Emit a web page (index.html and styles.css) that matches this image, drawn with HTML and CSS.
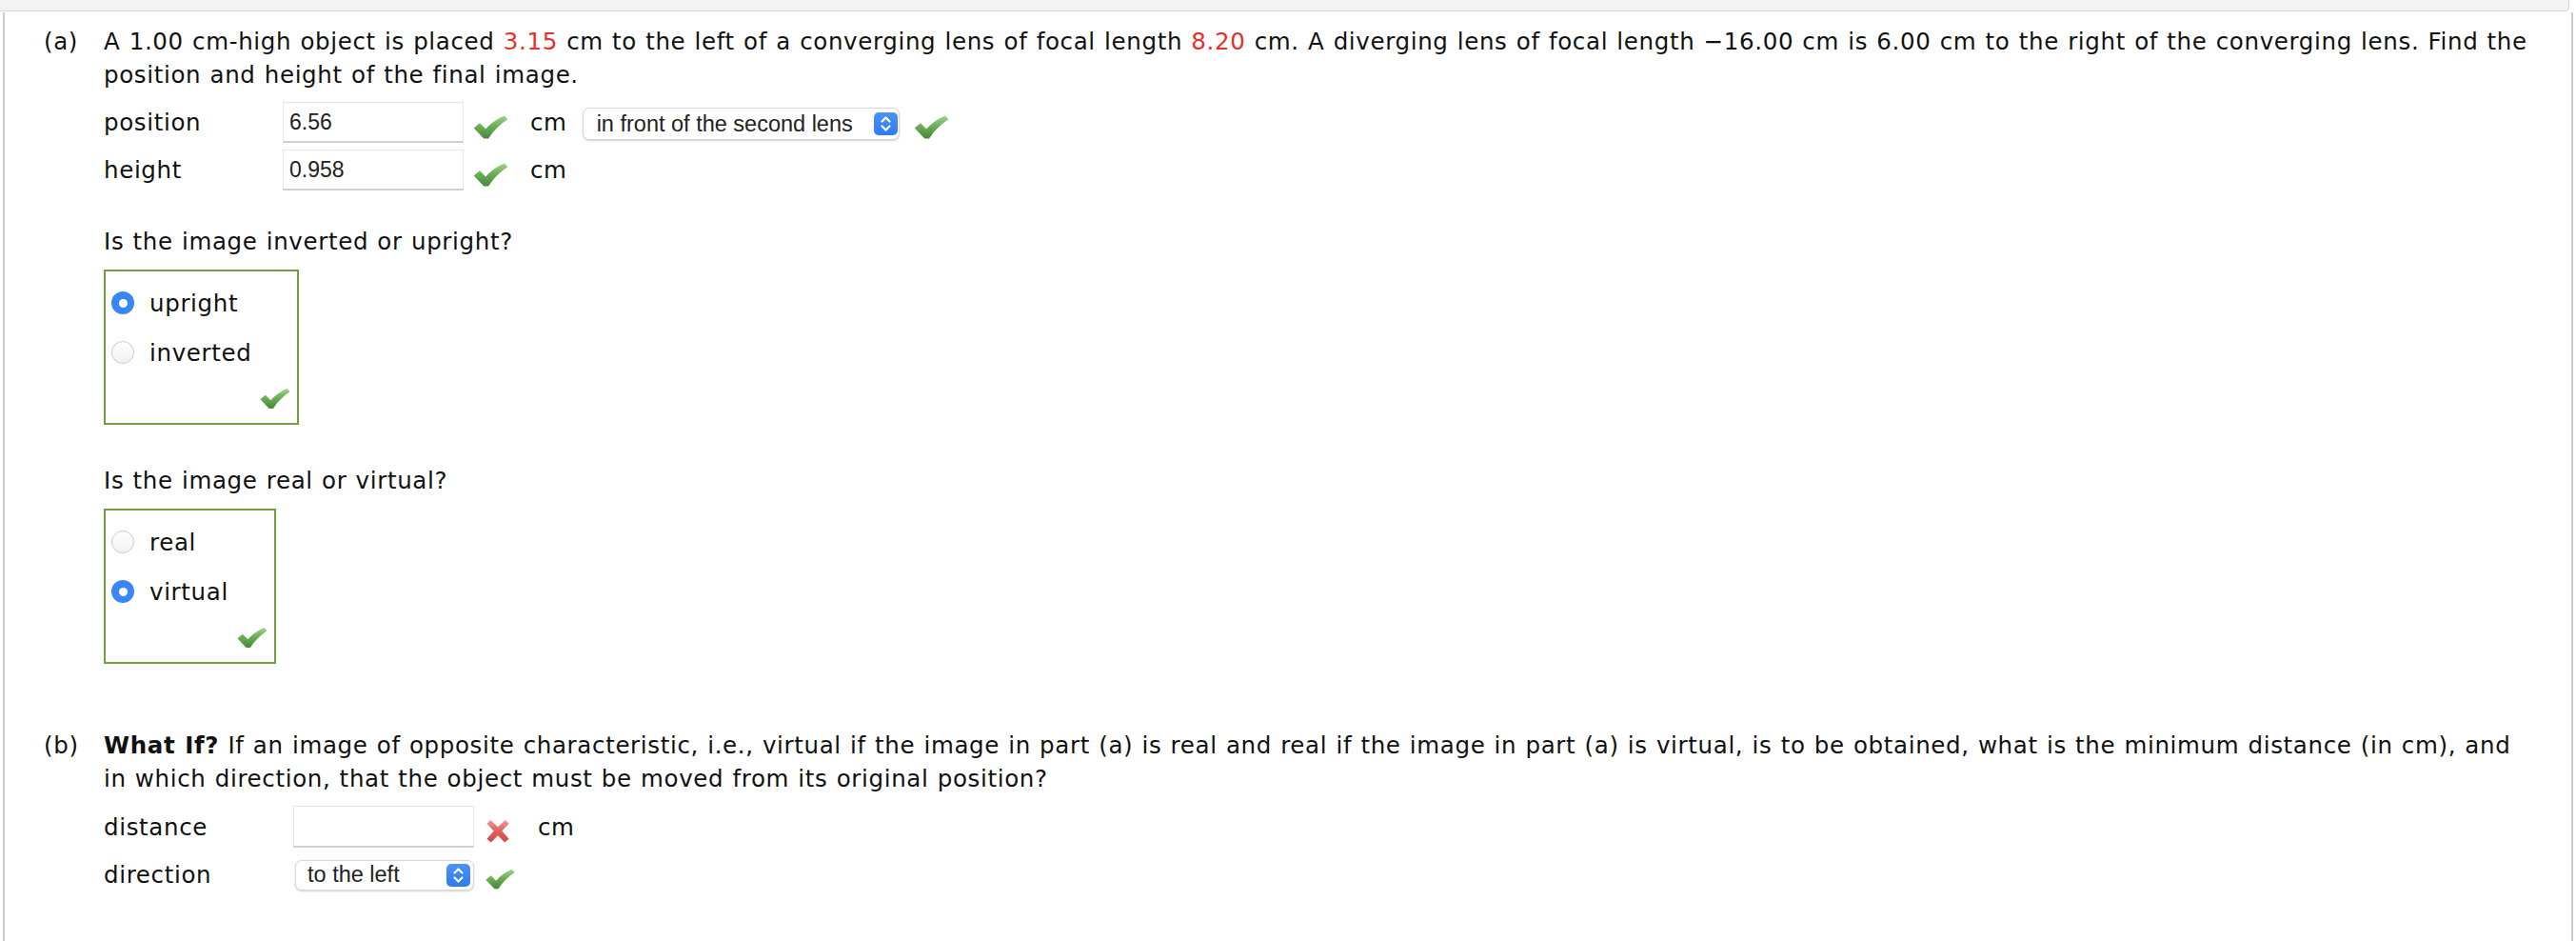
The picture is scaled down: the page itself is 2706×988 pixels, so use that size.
FILE: index.html
```html
<!DOCTYPE html>
<html>
<head>
<meta charset="utf-8">
<title>Lens problem</title>
<link rel="stylesheet" href="styles.css">
</head>
<body>
<svg class="defs" width="0" height="0" aria-hidden="true">
  <defs>
    <linearGradient id="gOk" x1="0" y1="0" x2="0" y2="1">
      <stop offset="0" stop-color="#a2d58c"/>
      <stop offset="0.45" stop-color="#6cae57"/>
      <stop offset="1" stop-color="#47883a"/>
    </linearGradient>
    <linearGradient id="gBad" x1="0" y1="0" x2="0" y2="1">
      <stop offset="0" stop-color="#f29a9a"/>
      <stop offset="0.5" stop-color="#e25e5e"/>
      <stop offset="1" stop-color="#d04848"/>
    </linearGradient>
  </defs>
</svg>
<div class="topbar"></div>
<div class="card">
  <div class="part">
    <div class="tag">(a)</div>
    <div class="body">
      <p class="q">A 1.00 cm-high object is placed <span class="red">3.15</span> cm to the left of a converging lens of focal length <span class="red">8.20</span> cm. A diverging lens of focal length −16.00 cm is 6.00 cm to the right of the converging lens. Find the position and height of the final image.</p>
      <div class="fields fields-a">
        <div class="label">position</div>
        <div class="ctrl">
          <div class="inp">6.56</div>
          <svg class="ok" viewBox="0 0 38 26"><path d="M0.5 14 L7 8.5 L13.5 15 C19 9 26 3.5 34 0.5 L37.5 4.5 C29 10 22 17 16.5 25.5 L11.5 25.5 Z" fill="url(#gOk)"/></svg>
          <span class="unit">cm</span>
          <div class="sel sel-a">
            <span>in front of the second lens</span>
            <span class="stepper"><svg viewBox="0 0 25 24"><path d="M8.5 9.5 L12.5 5.5 L16.5 9.5 M8.5 14.5 L12.5 18.5 L16.5 14.5" fill="none" stroke="#fff" stroke-width="2.2" stroke-linecap="round" stroke-linejoin="round"/></svg></span>
          </div>
          <svg class="ok ok-sel" viewBox="0 0 38 26"><path d="M0.5 14 L7 8.5 L13.5 15 C19 9 26 3.5 34 0.5 L37.5 4.5 C29 10 22 17 16.5 25.5 L11.5 25.5 Z" fill="url(#gOk)"/></svg>
        </div>
        <div class="label">height</div>
        <div class="ctrl">
          <div class="inp">0.958</div>
          <svg class="ok" viewBox="0 0 38 26"><path d="M0.5 14 L7 8.5 L13.5 15 C19 9 26 3.5 34 0.5 L37.5 4.5 C29 10 22 17 16.5 25.5 L11.5 25.5 Z" fill="url(#gOk)"/></svg>
          <span class="unit">cm</span>
        </div>
      </div>

      <p class="ask">Is the image inverted or upright?</p>
      <div class="choices">
        <div class="opt"><span class="radio on"></span><span>upright</span></div>
        <div class="opt"><span class="radio"></span><span>inverted</span></div>
        <div class="verdict"><svg class="ok" viewBox="0 0 38 26"><path d="M0.5 14 L7 8.5 L13.5 15 C19 9 26 3.5 34 0.5 L37.5 4.5 C29 10 22 17 16.5 25.5 L11.5 25.5 Z" fill="url(#gOk)"/></svg></div>
      </div>

      <p class="ask ask-2">Is the image real or virtual?</p>
      <div class="choices">
        <div class="opt"><span class="radio"></span><span>real</span></div>
        <div class="opt"><span class="radio on"></span><span>virtual</span></div>
        <div class="verdict"><svg class="ok" viewBox="0 0 38 26"><path d="M0.5 14 L7 8.5 L13.5 15 C19 9 26 3.5 34 0.5 L37.5 4.5 C29 10 22 17 16.5 25.5 L11.5 25.5 Z" fill="url(#gOk)"/></svg></div>
      </div>
    </div>
  </div>

  <div class="part part-b">
    <div class="tag">(b)</div>
    <div class="body">
      <p class="q"><b>What If?</b> If an image of opposite characteristic, i.e., virtual if the image in part (a) is real and real if the image in part (a) is virtual, is to be obtained, what is the minimum distance (in cm), and in which direction, that the object must be moved from its original position?</p>
      <div class="fields fields-b">
        <div class="label">distance</div>
        <div class="ctrl">
          <div class="inp inp-b"></div>
          <svg class="bad" viewBox="0 0 28 28"><path d="M2 6 L6 2 L14 9.5 L22 2 L26 6 L18.5 14 L26 22.5 L21.5 26.5 L14 19 L6.5 26.5 L2 22.5 L9.5 14 Z" fill="url(#gBad)"/></svg>
          <span class="unit unit-b">cm</span>
        </div>
        <div class="label">direction</div>
        <div class="ctrl">
          <div class="sel sel-b">
            <span>to the left</span>
            <span class="stepper"><svg viewBox="0 0 25 24"><path d="M8.5 9.5 L12.5 5.5 L16.5 9.5 M8.5 14.5 L12.5 18.5 L16.5 14.5" fill="none" stroke="#fff" stroke-width="2.2" stroke-linecap="round" stroke-linejoin="round"/></svg></span>
          </div>
          <svg class="ok ok-b" viewBox="0 0 38 26"><path d="M0.5 14 L7 8.5 L13.5 15 C19 9 26 3.5 34 0.5 L37.5 4.5 C29 10 22 17 16.5 25.5 L11.5 25.5 Z" fill="url(#gOk)"/></svg>
        </div>
      </div>
    </div>
  </div>
</div>
</body>
</html>
```
FILE: styles.css
```css
html, body {
  margin: 0;
  padding: 0;
  background: #ffffff;
}
body {
  font-family: "DejaVu Sans", Verdana, sans-serif;
  font-size: 24.5px;
  line-height: 35px;
  letter-spacing: 0.65px;
  word-spacing: 0.8px;
  color: #111;
  overflow: hidden;
}
.defs {
  position: absolute;
  width: 0;
  height: 0;
}
.topbar {
  height: 11px;
  background: #f3f3f3;
  border-bottom: 1px solid #d9d9d9;
  border-right: 1px solid #d9d9d9;
  border-bottom-right-radius: 4px;
  margin-right: 7px;
}
.card {
  margin: 1px 3px 0 3px;
  border-left: 2px solid #cbcbcb;
  border-right: 2px solid #cbcbcb;
  padding: 13px 0 0 41px;
  height: 975px;
  box-sizing: border-box;
}
.part {
  display: flex;
}
.part-b {
  margin-top: 68px;
}
.tag {
  width: 63px;
  flex: none;
}
.body {
  flex: 1;
  min-width: 0;
  padding-right: 39px;
}
.q {
  margin: 0;
}
.red {
  color: #e8302a;
}
.fields {
  display: grid;
  align-items: center;
  margin-top: 11px;
}
.fields-a {
  grid-template-columns: 188px auto;
  row-gap: 7px;
}
.fields-b {
  grid-template-columns: 199px auto;
  row-gap: 11px;
}
.ctrl {
  display: flex;
  align-items: center;
}
.inp {
  width: 190px;
  height: 43px;
  box-sizing: border-box;
  border: 1px solid #e4e4e4;
  border-bottom: 2px solid #cfcfcf;
  padding-left: 6px;
  display: flex;
  align-items: center;
  font-family: "Liberation Sans", Arial, sans-serif;
  font-size: 23px;
  letter-spacing: 0;
  word-spacing: 0;
  color: #222;
  background: #fff;
}
.inp-b {
  height: 44px;
}
.ok {
  width: 37px;
  height: 25px;
  flex: none;
  margin-left: 10px;
  margin-top: 10px;
}
.ok-sel {
  margin-left: 15px;
  margin-top: 9px;
}
.ok-b {
  width: 31px;
  height: 24px;
  margin-left: 12px;
  margin-top: 8px;
}
.bad {
  width: 28px;
  height: 27px;
  flex: none;
  margin-left: 11px;
  margin-top: 9px;
}
.unit {
  margin-left: 23px;
}
.unit-b {
  margin-left: 28px;
}
.sel {
  display: flex;
  align-items: center;
  justify-content: space-between;
  box-sizing: border-box;
  border: 1px solid #d8d8d8;
  border-radius: 7px;
  background: #fff;
  box-shadow: 0 1px 2px rgba(0, 0, 0, 0.18);
  font-family: "Liberation Sans", Arial, sans-serif;
  font-size: 23.5px;
  letter-spacing: 0;
  word-spacing: 0;
  color: #222;
}
.sel-a {
  margin-left: 16px;
  width: 333px;
  height: 34px;
  padding: 0 1px 0 14px;
  margin-top: 3px;
}
.sel-b {
  margin-left: 2px;
  width: 188px;
  height: 32px;
  padding: 0 3px 0 12px;
}
.stepper {
  display: flex;
  width: 25px;
  height: 24px;
  border-radius: 5px;
  background: linear-gradient(#4b93f8, #2f7bf0);
}
.stepper svg {
  width: 25px;
  height: 24px;
}
.ask {
  margin: 36px 0 0 0;
}
.ask-2 {
  margin-top: 41px;
}
.choices {
  display: inline-block;
  margin-top: 12px;
  border: 2px solid #6fa044;
  padding: 7px 48px 13px 6px;
}
.opt {
  display: flex;
  align-items: center;
  height: 52px;
}
.radio {
  width: 24px;
  height: 24px;
  box-sizing: border-box;
  border-radius: 50%;
  border: 1px solid #cacaca;
  background: linear-gradient(#ffffff, #f1f1f1);
  margin-right: 16px;
  flex: none;
  display: flex;
  align-items: center;
  justify-content: center;
}
.radio.on {
  border: none;
  background: #3a86f5;
}
.radio.on::after {
  content: "";
  width: 9px;
  height: 9px;
  border-radius: 50%;
  background: #fff;
}
.verdict {
  display: flex;
  justify-content: flex-end;
  margin-right: -41px;
  margin-top: 10px;
  height: 25px;
}
.verdict .ok {
  margin: 0;
  width: 32px;
  height: 25px;
}
```
